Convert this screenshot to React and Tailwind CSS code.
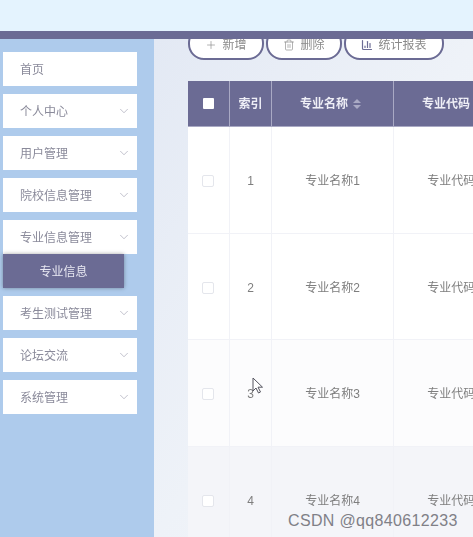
import { ChevronDown, Plus, Trash2, ChartColumn } from 'lucide-react'

const menus = [
  { name: '首页' },
  { name: '个人中心', arrow: true },
  { name: '用户管理', arrow: true },
  { name: '院校信息管理', arrow: true },
  { name: '专业信息管理', arrow: true, sub: '专业信息' },
  { name: '考生测试管理', arrow: true },
  { name: '论坛交流', arrow: true },
  { name: '系统管理', arrow: true },
]

const rows = [
  { id: 1, h: 'h-[107px]', bg: 'bg-white' },
  { id: 2, h: 'h-[106px]', bg: 'bg-white' },
  { id: 3, h: 'h-[107px]', bg: 'bg-[#fcfcfd]' },
  { id: 4, h: 'h-[107px]', bg: 'bg-[#f4f5f9]' },
]

function MenuItem({ item }) {
  return (
    <div className="mb-2">
      <div className="flex h-[34px] w-[134px] items-center justify-between bg-white pl-[17px] pr-[6px] pt-[2px] text-xs text-[#8a8a9a]">
        <span>{item.name}</span>
        {item.arrow && <ChevronDown size={14} strokeWidth={1.1} className="-mt-[2px] text-[#a0a0b0]" />}
      </div>
      {item.sub && (
        <div className="flex h-[34px] w-[121px] items-center justify-center bg-[#6b6b94] pt-[2px] text-xs text-[#e8e8f2] shadow-[0_0_4px_rgba(0,0,0,0.35)]">
          {item.sub}
        </div>
      )}
    </div>
  )
}

function ToolButton({ icon, label, width }) {
  return (
    <button className={`flex h-[33px] ${width} items-center justify-center gap-[5px] rounded-[16px] border-2 border-[#6b6b94] bg-white pt-[2px] text-xs text-[#8a8a8a]`}>
      {icon}
      {label}
    </button>
  )
}

function SortCaret() {
  return (
    <svg width="8" height="10" viewBox="0 0 8 10" fill="#a9a9c4">
      <path d="M4 0 8 4H0Z" />
      <path d="M4 10 0 6H8Z" />
    </svg>
  )
}

export default function App() {
  return (
    <div className="relative flex h-[537px] w-[473px] flex-col overflow-hidden font-['Liberation_Sans','Noto_Sans_CJK_SC',sans-serif]">
      <div className="h-[31px] shrink-0 bg-[#e4f3fe]" />
      <div className="h-2 shrink-0 bg-[#6b6b94]" />

      <div className="flex min-h-0 flex-1 blur-[0.5px]">
        <aside className="w-[154px] shrink-0 bg-[#aecbec] pl-[3px] pt-[13px]">
          {menus.map((m) => (
            <MenuItem key={m.name} item={m} />
          ))}
        </aside>

        <main className="min-w-0 flex-1 overflow-hidden bg-gradient-to-br from-[#e3e9f4] via-[#eef2f8] to-[#f5f7fb] pl-[34px]">
          <div className="-mt-[12px] flex gap-[2px]">
            <ToolButton width="w-[76px]" label="新增" icon={<Plus size={12} strokeWidth={1.3} />} />
            <ToolButton width="w-[76px]" label="删除" icon={<Trash2 size={12} strokeWidth={1.3} />} />
            <ToolButton width="w-[100px]" label="统计报表" icon={<ChartColumn size={12} strokeWidth={2.4} className="text-[#6b6b94]" />} />
          </div>

          <table className="mt-[21px] w-[450px] table-fixed border-separate border-spacing-0 text-center text-xs">
            <colgroup>
              <col className="w-[42px]" />
              <col className="w-[42px]" />
              <col className="w-[122px]" />
              <col className="w-[122px]" />
              <col className="w-[122px]" />
            </colgroup>
            <thead>
              <tr className="h-[46px] bg-[#6b6b94] font-bold text-[#eeeef6]">
                <th className="border-r border-b border-[#a9a9c4]">
                  <span className="mx-auto block h-[11px] w-[11px] rounded-[1px] bg-white" />
                </th>
                <th className="border-r border-b border-[#a9a9c4]">索引</th>
                <th className="border-r border-b border-[#a9a9c4] pr-[4px]">
                  <span className="inline-flex items-center gap-[5px]">
                    专业名称
                    <SortCaret />
                  </span>
                </th>
                <th className="border-r border-b border-[#a9a9c4] pr-[4px]">
                  <span className="inline-flex items-center gap-[5px]">
                    专业代码
                    <SortCaret />
                  </span>
                </th>
                <th className="border-b border-[#a9a9c4]" />
              </tr>
            </thead>
            <tbody className="text-[#7e7e7e]">
              {rows.map((r) => (
                <tr key={r.id} className={`${r.h} ${r.bg}`}>
                  <td className="border-r border-b border-[#f1f2f7] pt-[2px]">
                    <span className="mx-auto block h-3 w-3 -translate-x-[1px] rounded-[2px] border border-[#e4e6ec] bg-white" />
                  </td>
                  <td className="border-r border-b border-[#f1f2f7] pt-[2px]">{r.id}</td>
                  <td className="border-r border-b border-[#f1f2f7] pt-[2px]">专业名称{r.id}</td>
                  <td className="border-r border-b border-[#f1f2f7] pt-[2px]">专业代码{r.id}</td>
                  <td className="border-b border-[#f1f2f7]" />
                </tr>
              ))}
            </tbody>
          </table>
        </main>
      </div>

      <svg className="absolute left-[252px] top-[377px]" width="12" height="18" viewBox="0 0 12 18" fill="#ffffff" stroke="#55555f" strokeWidth="1">
        <path d="M1 1v13l3-3 2.500 5 2-1-2.500-4.800h4.500Z" />
      </svg>

      <div className="absolute left-[288px] top-[509px] text-base tracking-[0.35px] text-[#808087]">CSDN @qq840612233</div>
    </div>
  )
}
